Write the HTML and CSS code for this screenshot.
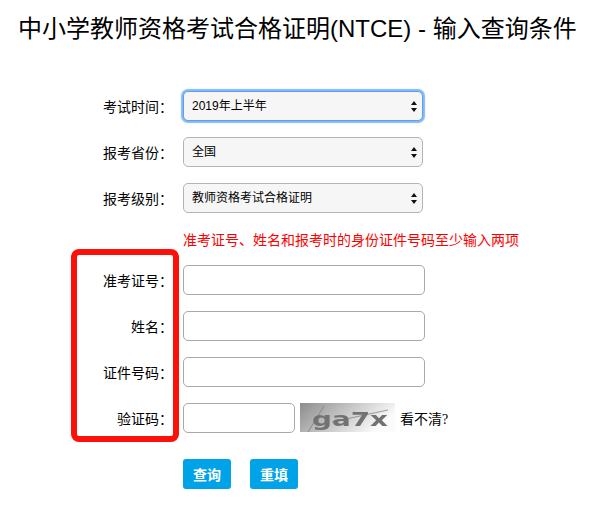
FILE: index.html
```html
<!DOCTYPE html>
<html lang="zh-CN">
<head>
  <meta charset="UTF-8">
  <title>中小学教师资格考试合格证明(NTCE) - 输入查询条件</title>
  <link rel="stylesheet" href="styles.css">
</head>
<body>

  <h1>中小学教师资格考试合格证明(NTCE) - 输入查询条件</h1>

  <form class="query-form">
    <div class="row">
      <label class="row-label">考试时间：</label>
      <select class="field-select is-focused">
        <option>2019年上半年</option>
      </select>
    </div>
    <div class="row">
      <label class="row-label">报考省份：</label>
      <select class="field-select">
        <option>全国</option>
      </select>
    </div>
    <div class="row">
      <label class="row-label">报考级别：</label>
      <select class="field-select">
        <option>教师资格考试合格证明</option>
      </select>
    </div>

    <p class="notice">准考证号、姓名和报考时的身份证件号码至少输入两项</p>

    <div class="row">
      <label class="row-label">准考证号：</label>
      <input class="field-input" type="text">
    </div>
    <div class="row">
      <label class="row-label">姓名：</label>
      <input class="field-input" type="text">
    </div>
    <div class="row">
      <label class="row-label">证件号码：</label>
      <input class="field-input" type="text">
    </div>
    <div class="row">
      <label class="row-label">验证码：</label>
      <input class="field-input field-code" type="text">
      <svg class="captcha" width="95" height="29" viewBox="0 0 95 29">
        <defs>
          <linearGradient id="captcha-bg" x1="0" x2="1" y1="0" y2="0.35">
            <stop offset="0" stop-color="#8c8c8c"/>
            <stop offset="1" stop-color="#fbfbfb"/>
          </linearGradient>
        </defs>
        <rect width="95" height="29" fill="url(#captcha-bg)"/>
        <path d="M8 29 L24 3 M32 19 L88 7" stroke="#777" stroke-width="0.7" fill="none"/>
        <text class="captcha-text" x="12" y="23" textLength="76" lengthAdjust="spacingAndGlyphs">ga7x</text>
      </svg>
      <a class="refresh">看不清?</a>
    </div>

    <div class="actions">
      <button class="btn" type="button">查询</button>
      <button class="btn" type="button">重填</button>
    </div>

    <div class="highlight"></div>
  </form>

</body>
</html>
```

FILE: styles.css
```css
body {
  margin: 0;
  background: #fff;
  color: #000;
  font-family: "Liberation Serif", "Noto Sans CJK SC", serif;
  font-size: 14px;
}

h1 {
  margin: 0;
  padding-top: 14px;
  height: 76px;
  box-sizing: border-box;
  padding-left: 18px;
  font-family: "Liberation Sans", "Noto Sans CJK SC", sans-serif;
  font-size: 24px;
  line-height: 30px;
  font-weight: 400;
  white-space: nowrap;
}

.query-form {
  position: relative;
  padding-top: 15px;
}

.row {
  display: flex;
  align-items: center;
  height: 30px;
  margin-bottom: 16px;
}

.row-label {
  width: 173px;
  margin-right: 10px;
  text-align: right;
  flex: none;
}

.field-select {
  appearance: none;
  width: 240px;
  height: 30px;
  box-sizing: border-box;
  padding: 0 8px;
  border: 1px solid #b4b4b4;
  border-radius: 5px;
  color: #000;
  font-family: "Liberation Sans", "Noto Sans CJK SC", sans-serif;
  font-size: 12px;
  background: #f6f6f6 url("data:image/svg+xml,%3Csvg xmlns='http://www.w3.org/2000/svg' width='6' height='11'%3E%3Cpath d='M3 0L6 4H0zM3 11L0 7H6z' fill='%23111'/%3E%3C/svg%3E") no-repeat right 5px center;
}

.is-focused {
  border-color: #5d9fee;
  box-shadow: 0 0 1px 2px #85b9f6;
}

.notice {
  margin: 18px 0 14px;
  padding-left: 183px;
  height: 20px;
  color: #f00;
  line-height: 20px;
  white-space: nowrap;
}

.field-input {
  width: 242px;
  height: 30px;
  box-sizing: border-box;
  border: 1px solid #a9a9a9;
  border-radius: 5px;
  background: #fff;
}

.field-code {
  width: 112px;
}

.captcha {
  margin-left: 5px;
  align-self: flex-start;
}

.captcha-text {
  font-family: "DejaVu Sans", sans-serif;
  font-size: 20px;
  font-weight: 700;
  fill: #727272;
  filter: blur(0.6px);
}

.refresh {
  margin-left: 5px;
}

.actions {
  display: flex;
  gap: 19px;
  padding-left: 183px;
  margin-top: 26px;
}

.btn {
  width: 48px;
  height: 30px;
  padding: 0;
  border: 0;
  border-radius: 3px;
  background: #00a2e8;
  color: #fff;
  font-family: "Liberation Sans", "Noto Sans CJK SC", sans-serif;
  font-size: 14px;
  font-weight: 700;
}

.highlight {
  position: absolute;
  left: 71px;
  top: 173px;
  width: 108px;
  height: 193px;
  box-sizing: border-box;
  border: 6px solid #fb1109;
  border-radius: 8px;
}
```
